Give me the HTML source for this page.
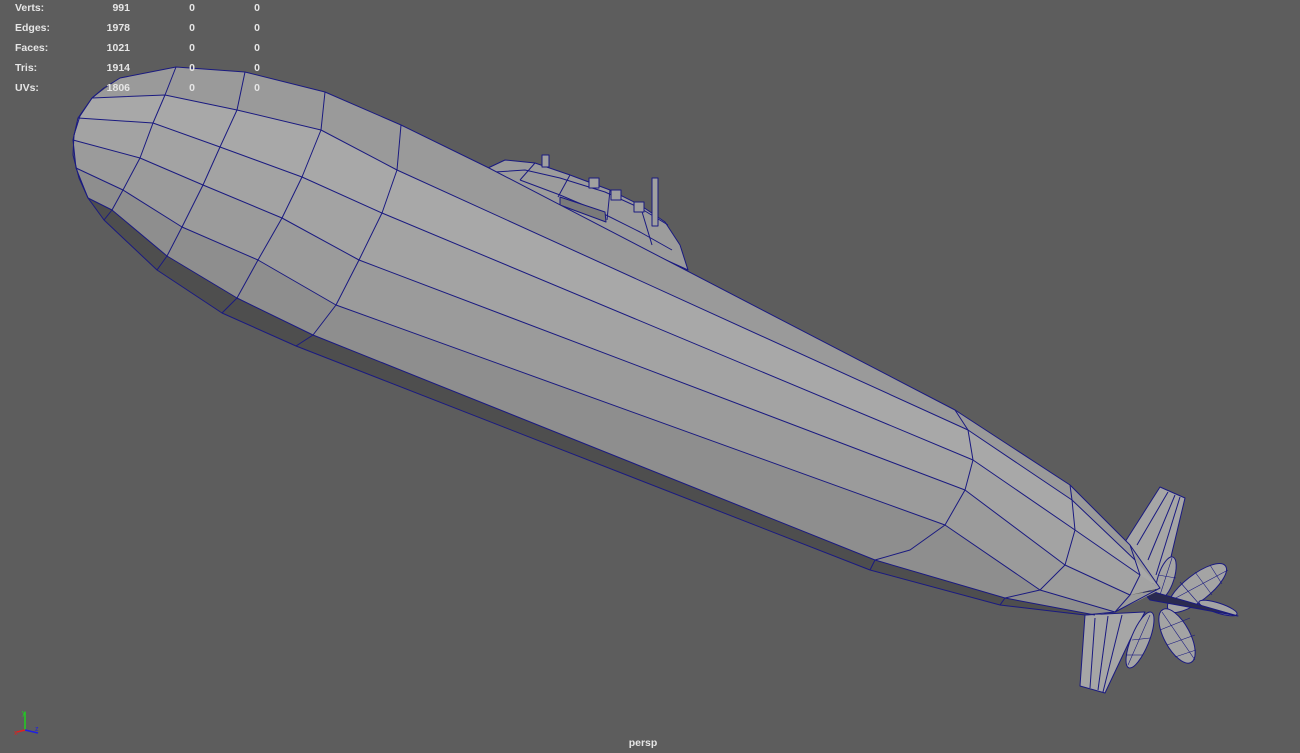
<!DOCTYPE html>
<html><head><meta charset="utf-8"><style>
html,body{margin:0;padding:0;width:1300px;height:753px;overflow:hidden;background:#5d5d5d}
svg{position:absolute;left:0;top:0}
.t{font-family:"Liberation Sans",sans-serif;font-weight:bold;font-size:10.5px;fill:#e6e6e6}
</style></head><body>
<svg width="1300" height="753" viewBox="0 0 1300 753" xmlns="http://www.w3.org/2000/svg">
<rect width="1300" height="753" fill="#5d5d5d"/>
<g stroke="#1a1a80" stroke-width="1" stroke-linejoin="round">
<!-- conning tower -->
<polygon points="488,168 505,160 535,163 570,175 610,190 640,205 665,222 680,245 688,270 600,230" fill="#9c9c9c"/>
<polyline points="495,172 525,170 560,178 605,192 640,208 668,225" fill="none"/>
<polyline points="520,180 560,195 600,212 640,232 672,250" fill="none"/>
<polyline points="535,163 520,180" fill="none"/><polyline points="570,175 558,197" fill="none"/>
<polyline points="610,190 607,220" fill="none"/><polyline points="640,205 652,245" fill="none"/>
<polygon points="560,197 605,212 606,222 560,205" fill="#7a7a7a"/>
<rect x="652" y="178" width="6" height="48" fill="#a0a0a0"/>
<rect x="542" y="155" width="7" height="12" fill="#a0a0a0"/>
<rect x="589" y="178" width="10" height="10" fill="#a0a0a0"/>
<rect x="611" y="190" width="10" height="10" fill="#a0a0a0"/>
<rect x="634" y="202" width="10" height="10" fill="#a0a0a0"/>
<!-- fins -->
<polygon points="1125,542 1160,487 1185,498 1165,582 1140,585" fill="#a6a6a6"/>
<polyline points="1137,545 1168,492" fill="none"/><polyline points="1148,560 1175,495" fill="none"/><polyline points="1156,575 1180,497" fill="none"/>
<polygon points="1085,615 1145,612 1130,640 1105,693 1080,686" fill="#a6a6a6"/>
<polyline points="1095,618 1090,688" fill="none"/><polyline points="1108,616 1098,690" fill="none"/><polyline points="1122,615 1103,692" fill="none"/>
<!-- propeller -->
<g fill="#a4a4a4">
<ellipse cx="1197" cy="588" rx="36" ry="13" transform="rotate(-38 1197 588)"/>
<ellipse cx="1177" cy="636" rx="30" ry="13" transform="rotate(62 1177 636)"/>
<ellipse cx="1140" cy="640" rx="30" ry="9" transform="rotate(112 1140 640)"/>
<ellipse cx="1166" cy="578" rx="22" ry="8" transform="rotate(-72 1166 578)"/>
<ellipse cx="1218" cy="608" rx="20" ry="5" transform="rotate(18 1218 608)"/>
</g>
<g stroke-width="0.6">
<line x1="1172" y1="600" x2="1228" y2="570"/><line x1="1180" y1="582" x2="1200" y2="605"/><line x1="1195" y1="572" x2="1212" y2="595"/><line x1="1210" y1="565" x2="1222" y2="584"/>
<line x1="1162" y1="612" x2="1195" y2="660"/><line x1="1160" y1="630" x2="1190" y2="618"/><line x1="1167" y1="645" x2="1195" y2="635"/><line x1="1175" y1="657" x2="1196" y2="650"/>
<line x1="1150" y1="615" x2="1128" y2="665"/><line x1="1132" y1="640" x2="1150" y2="638"/><line x1="1127" y1="655" x2="1143" y2="655"/>
<line x1="1160" y1="595" x2="1172" y2="558"/><line x1="1158" y1="575" x2="1176" y2="578"/>
</g>
<polygon points="1140,588 1238,616 1150,600" fill="#2a2a50"/>
</g>
<!-- body bands -->
<g stroke="none">
<polygon points="120,78 176,67 245,72 325,92 401,125 489,168 955,410 1070,485 1130,545 1160,588 1135,560 1072,500 968,430 397,170 321,130 237,110 165,95 92,98" fill="#9a9a9a"/>
<polygon points="92,98 165,95 237,110 321,130 397,170 968,430 1072,500 1135,560 1160,588 1140,575 1075,530 973,460 382,213 302,177 220,147 153,123 78,118" fill="#a8a8a8"/>
<polygon points="78,118 153,123 220,147 302,177 382,213 973,460 1075,530 1140,575 1160,588 1130,595 1065,565 965,490 359,260 282,218 203,185 140,158 73,140" fill="#a3a3a3"/>
<polygon points="73,140 140,158 203,185 282,218 359,260 965,490 1065,565 1130,595 1160,590 1115,612 1040,590 945,525 336,305 258,260 182,227 123,190 76,168" fill="#9b9b9b"/>
<polygon points="76,168 123,190 182,227 258,260 336,305 945,525 1040,590 1115,612 1095,615 1005,598 875,560 313,335 237,298 167,256 112,210 88,198" fill="#8e8e8e"/>
<polygon points="88,198 112,210 167,256 237,298 313,335 875,560 1005,598 1095,615 1085,615 1000,605 870,570 296,346 222,313 157,270 104,220" fill="#4e4e4e"/>
</g>
<g stroke="#1a1a80" stroke-width="1" fill="none" stroke-linejoin="round">
<polygon points="120,78 176,67 245,72 325,92 401,125 489,168 955,410 1070,485 1130,545 1160,588 1115,612 1085,615 1000,605 870,570 296,346 222,313 157,270 104,220 88,198 79,178 73,155 74,135 80,116 92,98 104,88"/>
<polyline points="92,98 165,95 237,110 321,130 397,170 968,430 1072,500 1135,560"/>
<polyline points="78,118 153,123 220,147 302,177 382,213 973,460 1075,530 1140,575"/>
<polyline points="73,140 140,158 203,185 282,218 359,260 965,490 1065,565 1130,595"/>
<polyline points="76,168 123,190 182,227 258,260 336,305 945,525 1040,590 1115,612"/>
<polyline points="88,198 112,210 167,256 237,298 313,335 875,560 1005,598 1095,615"/>
<polyline points="104,88 92,98 78,118 73,140 76,168 88,198"/>
<polyline points="176,67 165,95 153,123 140,158 123,190 112,210 104,220"/>
<polyline points="245,72 237,110 220,147 203,185 182,227 167,256 157,270"/>
<polyline points="325,92 321,130 302,177 282,218 258,260 237,298 222,313"/>
<polyline points="401,125 397,170 382,213 359,260 336,305 313,335 296,346"/>
<polyline points="955,410 968,430 973,460 965,490 945,525 910,550 875,560 870,570"/>
<polyline points="1070,485 1072,500 1075,530 1065,565 1040,590 1005,598 1000,605"/>
<polyline points="1130,545 1135,560 1140,575 1130,595 1115,612"/>
</g>
<!-- stats -->
<g class="t">
<text x="15" y="11">Verts:</text><text x="130" y="11" text-anchor="end">991</text><text x="195" y="11" text-anchor="end">0</text><text x="260" y="11" text-anchor="end">0</text>
<text x="15" y="31">Edges:</text><text x="130" y="31" text-anchor="end">1978</text><text x="195" y="31" text-anchor="end">0</text><text x="260" y="31" text-anchor="end">0</text>
<text x="15" y="51">Faces:</text><text x="130" y="51" text-anchor="end">1021</text><text x="195" y="51" text-anchor="end">0</text><text x="260" y="51" text-anchor="end">0</text>
<text x="15" y="71">Tris:</text><text x="130" y="71" text-anchor="end">1914</text><text x="195" y="71" text-anchor="end">0</text><text x="260" y="71" text-anchor="end">0</text>
<text x="15" y="91">UVs:</text><text x="130" y="91" text-anchor="end">1806</text><text x="195" y="91" text-anchor="end">0</text><text x="260" y="91" text-anchor="end">0</text>
<text x="643" y="746" text-anchor="middle">persp</text>
</g>
<!-- axis gizmo -->
<line x1="25" y1="730" x2="25" y2="712" stroke="#20d020" stroke-width="1.5"/>
<text x="22" y="715" font-family="Liberation Sans" font-size="7" fill="#20d020">y</text>
<line x1="25" y1="730" x2="38" y2="733" stroke="#2020e0" stroke-width="1.5"/>
<line x1="25" y1="730" x2="17" y2="732" stroke="#e02020" stroke-width="1.5"/>
<text x="14" y="735" font-family="Liberation Sans" font-size="7" fill="#e02020">x</text>
<text x="35" y="731" font-family="Liberation Sans" font-size="7" fill="#2020e0">z</text>
</svg>
</body></html>
